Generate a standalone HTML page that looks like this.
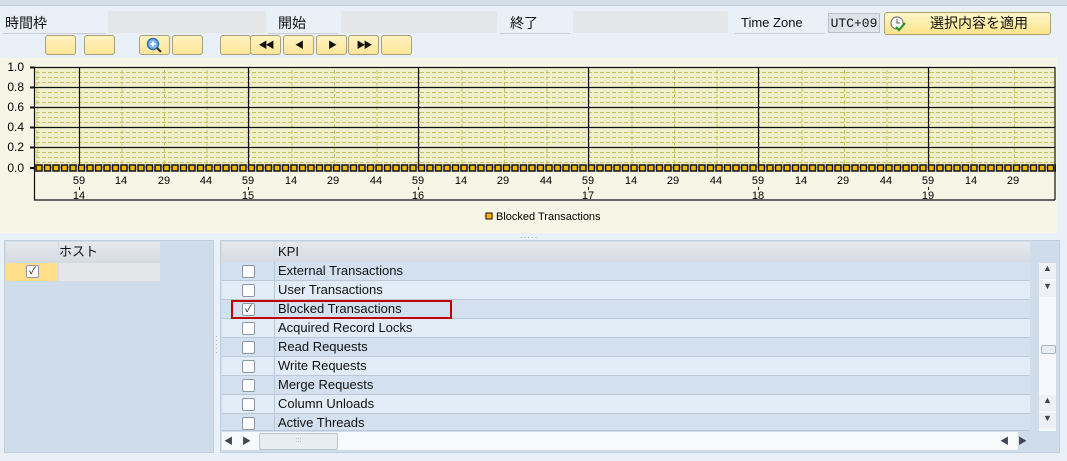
<!DOCTYPE html>
<html><head><meta charset="utf-8"><style>
body{margin:0;width:1067px;height:461px;background:#e9f0f7;font-family:"Liberation Sans","Noto Sans CJK JP",sans-serif;position:relative;overflow:hidden;color:#111}
.a{position:absolute}
.lbl{font-size:14px;top:13px}
.fld{background:#e5e6e8;border-radius:2px;height:22px;top:11px}
.ul{border-bottom:1px solid #c8ced6;height:22px;top:11px}
.btn{position:absolute;top:35px;height:20px;background:linear-gradient(#fff3c0,#fde69a);border:1px solid #a9a07a;border-radius:3px;box-sizing:border-box;width:31px;text-align:center;font-size:9px;line-height:19px;letter-spacing:-2px}
.cb{position:absolute;width:11px;height:11px;background:#fff;border:1px solid #8a96a6;border-radius:2px}
.row{position:absolute;left:222px;width:808px;height:18px;border-bottom:1px solid #b9c9da;font-size:13px;line-height:18px}
.row span{position:absolute;left:56px}
.row .cb{left:20px;top:3px}
</style></head><body>
<div class="a" style="left:0;top:0;width:1067px;height:5px;background:#d4dee9;border-bottom:1px solid #c0ccd8"></div>
<div class="a ul" style="left:3px;width:103px"></div><div class="a lbl" style="left:5px">時間枠</div>
<div class="a fld" style="left:108px;width:158px"></div>
<div class="a ul" style="left:268px;width:70px"></div><div class="a lbl" style="left:278px">開始</div>
<div class="a fld" style="left:341px;width:156px"></div>
<div class="a ul" style="left:500px;width:70px"></div><div class="a lbl" style="left:510px">終了</div>
<div class="a fld" style="left:573px;width:155px"></div>
<div class="a ul" style="left:735px;width:90px"></div><div class="a" style="left:741px;top:15px;font-size:13px">Time Zone</div>
<div class="a" style="left:828px;top:13px;width:52px;height:20px;background:#dde3ea;border:1px solid #b8c0ca;box-sizing:border-box;font-family:'Liberation Mono',monospace;font-size:13px;line-height:19px;text-align:center">UTC+09</div>
<div class="a" style="left:884px;top:12px;width:167px;height:23px;background:linear-gradient(#fff5c8,#fde48a);border:1px solid #b0a270;border-radius:3px;box-sizing:border-box;font-size:14px;line-height:21px">
<svg class="a" style="left:4px;top:2px" width="18" height="18"><circle cx="8" cy="8" r="6" fill="#fff" stroke="#777" stroke-width="1.2"/><path d="M8 4v4h3" stroke="#555" fill="none"/><path d="M7 12l3 3 6-7" stroke="#2a9a2a" stroke-width="2.2" fill="none"/></svg>
<span class="a" style="left:45px;top:0">選択内容を適用</span></div>
<div class="btn" style="left:45px"></div><div class="btn" style="left:84px"></div>
<div class="btn" style="left:139px"><svg width="20" height="18" style="margin-top:1px"><circle cx="8" cy="7" r="5.5" fill="#7fb6e6" stroke="#2f6fae" stroke-width="1.5"/><path d="M5.5 7h5M8 4.5v5" stroke="#fff" stroke-width="1.6"/><path d="M12 11l4 4" stroke="#333" stroke-width="2.2"/></svg></div>
<div class="btn" style="left:172px"></div><div class="btn" style="left:220px"></div>
<div class="btn" style="left:250px">◀◀</div><div class="btn" style="left:283px">◀</div><div class="btn" style="left:316px">▶</div><div class="btn" style="left:348px">▶▶</div><div class="btn" style="left:381px"></div>
<div class="a" style="left:0;top:58px;width:1057px;height:175px;background:#f6f6e6"></div>
<svg class="a" style="left:0;top:58px" width="1060" height="175" font-family="Liberation Sans" font-size="11">
<defs>
<pattern id="hd" x="0" y="9" width="6" height="5" patternUnits="userSpaceOnUse"><path d="M0 .5h4" stroke="#c6c266" stroke-width="1"/></pattern>
<pattern id="vd" x="79" y="0" width="42.5" height="6" patternUnits="userSpaceOnUse"><path d="M.5 0v4" stroke="#c6c266" stroke-width="1"/></pattern>
<pattern id="mk" x="35" y="106" width="8.5" height="8" patternUnits="userSpaceOnUse"><rect x="1" y="1" width="6" height="6" fill="#f5b800" stroke="#111" stroke-width="1.5"/></pattern>
</defs>
<rect x="35" y="9" width="1020" height="101" fill="#f1f0cc"/>
<rect x="35" y="9" width="1020" height="101" fill="url(#hd)"/>
<rect x="35" y="9" width="1020" height="101" fill="url(#vd)"/>
<g stroke="#111" stroke-width="1.2" fill="none">
<path d="M35 9.5H1055M35 29.5H1055M35 49.5H1055M35 69.5H1055M35 89.5H1055"/>
<path d="M79.5 9V110M248.5 9V110M418.5 9V110M588.5 9V110M758.5 9V110M928.5 9V110M1055 9V142"/>
<path d="M34.5 9V142H1055"/>
<path d="M30 9.5h5M30 29.5h5M30 49.5h5M30 69.5h5M30 89.5h5M30 110h5" stroke-width="2"/>
<path d="M79.5 129v3M248.5 129v3M418.5 129v3M588.5 129v3M758.5 129v3M928.5 129v3" stroke-width="1"/>
</g>
<rect x="34" y="106" width="1022" height="8" fill="url(#mk)"/>
<g font-size="12" text-anchor="end"><text x="24" y="13">1.0</text><text x="24" y="33">0.8</text><text x="24" y="53">0.6</text><text x="24" y="73">0.4</text><text x="24" y="93">0.2</text><text x="24" y="114">0.0</text></g>
<g text-anchor="middle" font-size="11">
<text x="79" y="126">59</text><text x="121" y="126">14</text><text x="164" y="126">29</text><text x="206" y="126">44</text>
<text x="248" y="126">59</text><text x="291" y="126">14</text><text x="333" y="126">29</text><text x="376" y="126">44</text>
<text x="418" y="126">59</text><text x="461" y="126">14</text><text x="503" y="126">29</text><text x="546" y="126">44</text>
<text x="588" y="126">59</text><text x="631" y="126">14</text><text x="673" y="126">29</text><text x="716" y="126">44</text>
<text x="758" y="126">59</text><text x="801" y="126">14</text><text x="843" y="126">29</text><text x="886" y="126">44</text>
<text x="928" y="126">59</text><text x="971" y="126">14</text><text x="1013" y="126">29</text>
<text x="79" y="141">14</text><text x="248" y="141">15</text><text x="418" y="141">16</text><text x="588" y="141">17</text><text x="758" y="141">18</text><text x="928" y="141">19</text>
</g>
<path d="M484 158h10" stroke="#e0a000"/><rect x="486" y="155" width="6" height="6" fill="#f5b800" stroke="#111"/>
<text x="496" y="162">Blocked Transactions</text>
</svg>
<div class="a" style="left:520px;top:233px;font-size:8px;color:#8899aa;letter-spacing:1px">·····</div>
<div class="a" style="left:4px;top:240px;width:210px;height:213px;background:#cfdcea;border:1px solid #c0cedd;box-sizing:border-box"></div>
<div class="a" style="left:6px;top:242px;width:52px;height:20px;background:linear-gradient(#e6e9ee,#d6dbe2)"></div>
<div class="a" style="left:59px;top:242px;width:101px;height:20px;background:linear-gradient(#e6e9ee,#d6dbe2);font-size:13px;line-height:20px">ホスト</div>
<div class="a" style="left:6px;top:263px;width:52px;height:18px;background:#fddf8a"><div class="cb" style="left:20px;top:2px;font-size:10px;line-height:11px;text-align:center">✓</div></div>
<div class="a" style="left:59px;top:263px;width:101px;height:18px;background:#e5e6e8"></div>
<div class="a" style="left:215px;top:335px;font-size:8px;color:#8899aa;line-height:4px">·<br>·<br>·<br>·<br>·</div>
<div class="a" style="left:220px;top:240px;width:840px;height:213px;background:#cfdcea;border:1px solid #c0cedd;box-sizing:border-box"></div>
<div class="a" style="left:222px;top:242px;width:52px;height:20px;background:linear-gradient(#e6e9ee,#d6dbe2)"></div>
<div class="a" style="left:275px;top:242px;width:755px;height:20px;background:linear-gradient(#e6e9ee,#d6dbe2);font-size:13px;line-height:20px;padding-left:3px;box-sizing:border-box">KPI</div>
<div class="row" style="top:262px;background:#d3e0ef"><div class="cb"></div><span>External Transactions</span></div>
<div class="row" style="top:281px;background:#e1ecf6"><div class="cb"></div><span>User Transactions</span></div>
<div class="row" style="top:300px;background:#d3e0ef"><div class="cb" style="font-size:10px;line-height:11px;text-align:center">✓</div><span>Blocked Transactions</span></div>
<div class="row" style="top:319px;background:#e1ecf6"><div class="cb"></div><span>Acquired Record Locks</span></div>
<div class="row" style="top:338px;background:#d3e0ef"><div class="cb"></div><span>Read Requests</span></div>
<div class="row" style="top:357px;background:#e1ecf6"><div class="cb"></div><span>Write Requests</span></div>
<div class="row" style="top:376px;background:#d3e0ef"><div class="cb"></div><span>Merge Requests</span></div>
<div class="row" style="top:395px;background:#e1ecf6"><div class="cb"></div><span>Column Unloads</span></div>
<div class="row" style="top:414px;background:#d3e0ef;height:16px;overflow:hidden"><div class="cb"></div><span>Active Threads</span></div>
<div class="a" style="left:274px;top:262px;width:1px;height:168px;background:#b9c9da"></div>
<div class="a" style="left:231px;top:300px;width:221px;height:19px;border:2px solid #c00000;box-sizing:border-box"></div>
<div class="a" style="left:1039px;top:263px;width:17px;height:168px;background:#f6f8fb"></div>
<div class="a" style="left:1039px;top:263px;width:17px;height:16px;font-size:9px;text-align:center;color:#445;background:#edf1f6">▲</div>
<div class="a" style="left:1039px;top:281px;width:17px;height:16px;font-size:9px;text-align:center;color:#445;background:#edf1f6">▼</div>
<div class="a" style="left:1041px;top:345px;width:13px;height:7px;border:1px solid #a8b4c2;background:#e6ecf2;border-radius:2px"></div>
<div class="a" style="left:1039px;top:395px;width:17px;height:16px;font-size:9px;text-align:center;color:#445;background:#edf1f6">▲</div>
<div class="a" style="left:1039px;top:413px;width:17px;height:16px;font-size:9px;text-align:center;color:#445;background:#edf1f6">▼</div>
<div class="a" style="left:222px;top:432px;width:796px;height:18px;background:#f8f9fb"></div>
<div class="a" style="left:224px;top:434px;font-size:9px;color:#445">◀</div><div class="a" style="left:242px;top:434px;font-size:9px;color:#445">▶</div>
<div class="a" style="left:259px;top:433px;width:77px;height:15px;border:1px solid #b8c2ce;background:#e8edf2;border-radius:2px;font-size:7px;text-align:center;color:#99a;line-height:14px">:::</div>
<div class="a" style="left:1000px;top:434px;font-size:9px;color:#445">◀</div><div class="a" style="left:1018px;top:434px;font-size:9px;color:#445">▶</div>
</body></html>
